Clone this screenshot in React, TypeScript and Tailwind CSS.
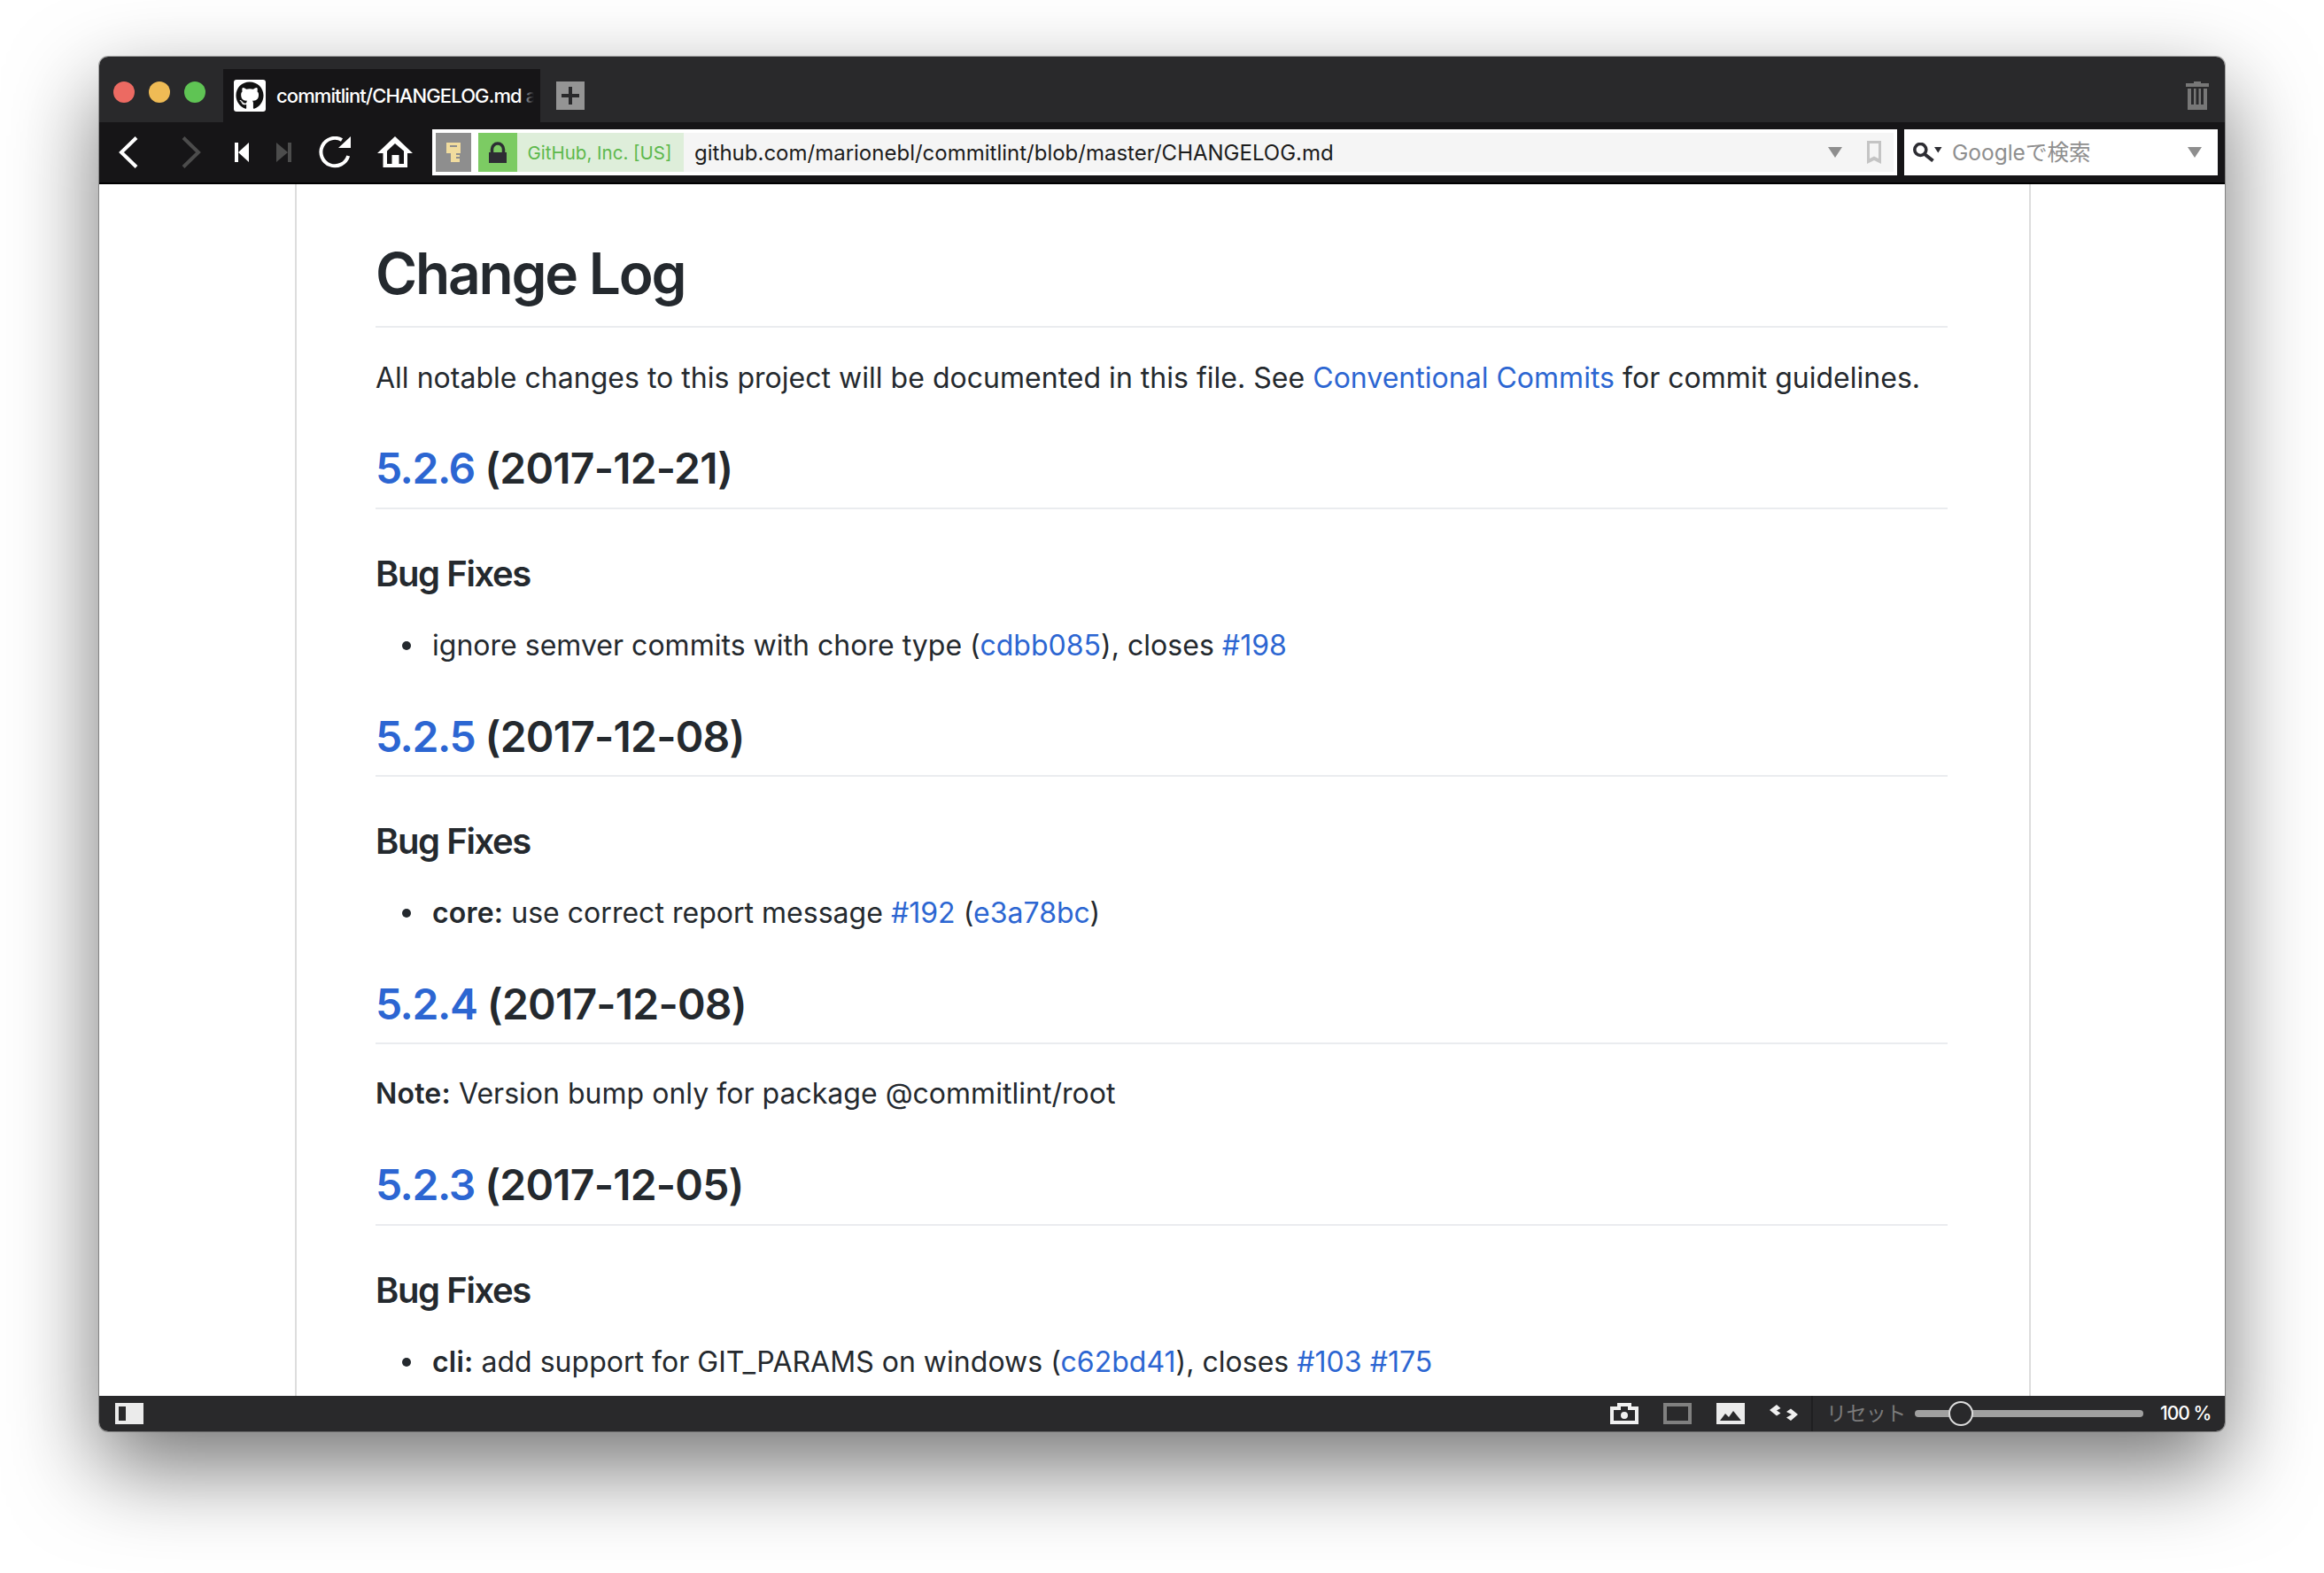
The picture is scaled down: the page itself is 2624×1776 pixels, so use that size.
import type { ReactNode } from "react";
import { FaGithub } from "react-icons/fa";

function A({ children }: { children: ReactNode }) {
  return <a className="text-[#2c66d2]">{children}</a>;
}

function Version({ v, date }: { v: string; date: string }) {
  return (
    <h2 className="mt-[48px] mb-[32px] border-b-2 border-[#eaecef] pt-[1px] pb-[13.4px] text-[48px] leading-[60px] font-semibold tracking-[-0.8px]">
      <span className="tracking-[-1.4px]">
        <A>{v}</A>
      </span>{" "}
      ({date})
    </h2>
  );
}

function Bold({ children }: { children: ReactNode }) {
  return <b className="font-semibold tracking-[0.2px]">{children}</b>;
}

function BugFixes({ children }: { children: ReactNode }) {
  return (
    <>
      <h3 className="mt-[48px] mb-[32px] text-[40px] leading-[50px] font-semibold tracking-[-1.4px]">Bug Fixes</h3>
      <ul className="mb-[32px] pl-[30px]">
        <li className="flex items-center">
          <span className="mr-[24px] h-[10px] w-[10px] shrink-0 rounded-full bg-[#24292e]" />
          <span>{children}</span>
        </li>
      </ul>
    </>
  );
}

function Markdown() {
  return (
    <div className="text-[32px] leading-[48px] tracking-[0.02px] text-[#24292e]">
      <h1 className="mb-[32px] border-b-2 border-[#eaecef] pb-[19.2px] text-[64px] leading-[80px] font-semibold tracking-[-2.2px]">
        Change Log
      </h1>
      <p className="mb-[32px] h-[48px] pt-[1px]">
        All notable changes to this project will be documented in this file. See <A>Conventional Commits</A> for commit
        guidelines.
      </p>
      <Version v="5.2.6" date="2017-12-21" />
      <BugFixes>
        ignore semver commits with chore type (<A>cdbb085</A>), closes <A>#198</A>
      </BugFixes>
      <Version v="5.2.5" date="2017-12-08" />
      <BugFixes>
        <Bold>core:</Bold> use correct report message <A>#192</A> (<A>e3a78bc</A>)
      </BugFixes>
      <Version v="5.2.4" date="2017-12-08" />
      <p className="mb-[32px]">
        <Bold>Note:</Bold> Version bump only for package @commitlint/root
      </p>
      <Version v="5.2.3" date="2017-12-05" />
      <BugFixes>
        <Bold>cli:</Bold> add support for GIT_PARAMS on windows (<A>c62bd41</A>), closes <A>#103</A> <A>#175</A>
      </BugFixes>
    </div>
  );
}

function TabBar() {
  return (
    <div className="flex h-[74px] items-start bg-[#29292b]">
      <div className="mt-[28px] ml-[16px] flex gap-[16px]">
        <span className="h-[24px] w-[24px] rounded-full bg-[#ec6a62]" />
        <span className="h-[24px] w-[24px] rounded-full bg-[#efbb55]" />
        <span className="h-[24px] w-[24px] rounded-full bg-[#5fc454]" />
      </div>
      <div className="relative mt-[14px] ml-[20px] flex h-[60px] w-[358px] items-center overflow-hidden bg-[#161517] pl-[12px]">
        <span className="flex h-[36px] w-[36px] shrink-0 items-center justify-center rounded-[3px] bg-white">
          <FaGithub className="h-[32px] w-[32px] text-[#111] blur-[0.6px]" />
        </span>
        <span className="ml-[12px] w-[298px] shrink-0 overflow-hidden text-[22px] font-medium tracking-[-0.9px] whitespace-nowrap text-white">
          commitlint/CHANGELOG.md a
        </span>
        <span className="absolute top-0 right-0 h-full w-[24px] bg-gradient-to-r from-transparent to-[#161517] to-70%" />
      </div>
      <div className="mt-[28px] ml-[18px] flex h-[32px] w-[32px] items-center justify-center bg-[#949494]">
        <svg width="20" height="20" viewBox="0 0 20 20">
          <path d="M8 0h4v8h8v4h-8v8H8v-8H0V8h8z" fill="#29292b" />
        </svg>
      </div>
      <svg className="mt-[28px] ml-auto mr-[18px]" width="26" height="32" viewBox="0 0 26 32" fill="#777">
        <path d="M9 0h8v2h9v4H0V2h9z" />
        <path fillRule="evenodd" d="M2 8h22v24H2zM6 8v18h3V8zM11.5 8v18h3V8zM17 8v18h3V8z" />
      </svg>
    </div>
  );
}

function NavIcons() {
  return (
    <>
      <svg className="ml-[21px]" width="24" height="36" viewBox="0 0 24 36" fill="none" stroke="#fff" strokeWidth="4">
        <path d="M21 1.5 4 18l17 16.5" />
      </svg>
      <svg className="ml-[47px]" width="24" height="36" viewBox="0 0 24 36" fill="none" stroke="#4c4c4c" strokeWidth="4">
        <path d="M3 1.5 20 18 3 34.5" />
      </svg>
      <svg className="ml-[37px]" width="16" height="22" viewBox="0 0 16 22" fill="#fff">
        <path d="M0 0h4v22H0zM4 11 16 0v22z" />
      </svg>
      <svg className="ml-[31px]" width="17" height="22" viewBox="0 0 17 22" fill="#4c4c4c">
        <path d="M13 0h4v22h-4zM13 11 0 0v22z" />
      </svg>
      <svg className="ml-[31px]" width="36" height="36" viewBox="0 0 36 36" fill="none">
        <path d="M33.200 22A15.700 15.700 0 1 1 26 4" stroke="#fff" strokeWidth="4" />
        <path d="M36 0v13H22z" fill="#fff" />
      </svg>
      <svg className="ml-[30px]" width="40" height="36" viewBox="0 0 40 36" fill="#fff">
        <path
          fillRule="evenodd"
          d="M20 0 40 19h-6v16H6.500V19H0zM20 8l-9 8.500V31h5.500V21h8v10H30V16.500z"
        />
      </svg>
    </>
  );
}

function AddressBar() {
  return (
    <div className="ml-[22px] flex h-[52px] w-[1654px] items-stretch bg-white p-[4px]">
      <div className="flex w-[40px] items-center justify-center bg-[#8e8e8e]">
        <svg width="16" height="22" viewBox="0 0 16 22" fill="#f1dc9e">
          <path fillRule="evenodd" d="M0 0h16v12h-5v2h4v2h-4v2h4v4H5V12H0zM4 3v2h8V3z" />
        </svg>
      </div>
      <div className="ml-[8px] flex w-[44px] items-center justify-center bg-[#7ccb63]">
        <svg width="20" height="24" viewBox="0 0 20 24">
          <path d="M0 12h20v12H0z" fill="#2d2d33" />
          <path d="M3.500 13V8.500a6.500 6.500 0 0 1 13 0V13" fill="none" stroke="#2d2d33" strokeWidth="3.500" />
        </svg>
      </div>
      <div className="flex w-[188px] items-center justify-center bg-[#deeeda] pt-[2px] pr-[2px] text-[20.5px] text-[#5cb84c]">
        GitHub, Inc. [US]
      </div>
      <div className="flex flex-1 items-center bg-[#f5f5f5] pl-[12px] text-[24px] text-[#1c1c1c]">
        <span className="pt-[2px]">github.com/marionebl/commitlint/blob/master/CHANGELOG.md</span>
        <svg className="ml-auto" width="16" height="12" viewBox="0 0 16 12" fill="#8e8e8e">
          <path d="M0 0h16L8 12z" />
        </svg>
        <svg className="mr-[14px] ml-[28px]" width="16" height="26" viewBox="0 0 16 26" fill="#c4c4c4">
          <path fillRule="evenodd" d="M0 0h16v26l-8-4-8 4zM3 3v17l5-2.500 5 2.500V3z" />
        </svg>
      </div>
    </div>
  );
}

function SearchBox() {
  return (
    <div className="ml-[8px] flex h-[52px] w-[354px] items-center bg-white pl-[10px] text-[24.5px] text-[#8e8e8e]">
      <svg width="33" height="22" viewBox="0 0 33 22">
        <circle cx="8.300" cy="8" r="6.500" fill="none" stroke="#2d2d33" strokeWidth="3.600" />
        <path d="m13 13 9.500 7.500" stroke="#2d2d33" strokeWidth="4" />
        <path d="M24 5h8.500l-4.200 6.500z" fill="#2d2d33" />
      </svg>
      <span className="ml-[11px]">Googleで検索</span>
      <svg className="mr-[18px] ml-auto" width="16" height="12" viewBox="0 0 16 12" fill="#8e8e8e">
        <path d="M0 0h16L8 12z" />
      </svg>
    </div>
  );
}

function Toolbar() {
  return (
    <div className="flex h-[70px] items-start border-b-2 border-black bg-[#161517]">
      <div className="flex h-[68px] w-full items-center">
        <NavIcons />
        <AddressBar />
        <SearchBox />
      </div>
    </div>
  );
}

function StatusBar() {
  return (
    <div className="flex h-[40px] items-center bg-[#29292b]">
      <div className="ml-[18px] h-[24px] w-[32px] bg-[#ebebeb] py-[4px] pl-[4px]">
        <div className="h-[16px] w-[8px] bg-[#29292b]" />
      </div>
      <svg className="ml-auto" width="32" height="24" viewBox="0 0 32 24" fill="#f0f0f0">
        <path fillRule="evenodd" d="M8 0h16v4h8v20H0V4h8zM4 8v12h24V8h-8V4h-8v4zM16 10a4 4 0 1 1 0 8 4 4 0 0 1 0-8z" />
      </svg>
      <div className="ml-[28px] h-[24px] w-[32px] border-[4px] border-[#808080]" />
      <svg className="ml-[28px]" width="32" height="24" viewBox="0 0 32 24">
        <path d="M0 0h32v24H0z" fill="#ebebeb" />
        <path d="M4 20l6-8 4 4 5-7 9 11z" fill="#29292b" />
      </svg>
      <svg className="mb-[2px] ml-[28px]" width="32" height="18" viewBox="0 0 32 18" fill="#f0f0f0">
        <path d="M0 6 8 0l4.500 4L8 6.500l4.500 3L8 12.500zM32 11l-8-6.500L19 8l6 3-6 3.500 5 3.500z" />
      </svg>
      <div className="ml-[15px] h-full w-[2px] bg-[#1f1f21]" />
      <span className="ml-[15px] w-[85px] text-[23px] tracking-[-0.6px] whitespace-nowrap text-[#7b7b7b]">リセット</span>
      <div className="relative ml-[15px] h-[8px] w-[258px] rounded-full bg-[#a0a0a0]">
        <span className="absolute top-[-10px] left-[38px] h-[28px] w-[28px] rounded-full border-2 border-[#dcdcdc] bg-[#29292b]" />
      </div>
      <span className="mr-[17px] ml-[19px] w-[56px] text-[21px] font-medium tracking-[-1px] whitespace-nowrap text-white">
        100 %
      </span>
    </div>
  );
}

export default function App() {
  return (
    <div className="h-[1776px] w-[2624px] overflow-hidden bg-white pt-[64px] pl-[112px] [font-family:Inter,'Noto_Sans_CJK_JP',sans-serif]">
      <div className="flex h-[1552px] w-[2400px] flex-col overflow-hidden rounded-[10px] shadow-[0_40px_100px_rgba(0,0,0,0.55),0_0_0_1px_rgba(0,0,0,0.3)]">
        <TabBar />
        <Toolbar />
        <div className="min-h-0 flex-1 overflow-hidden bg-white">
          <div className="ml-[221px] h-full w-[1960px] border-x-2 border-[#dddddd] pt-[61px] pr-[92px] pl-[89px]">
            <Markdown />
          </div>
        </div>
        <StatusBar />
      </div>
    </div>
  );
}
